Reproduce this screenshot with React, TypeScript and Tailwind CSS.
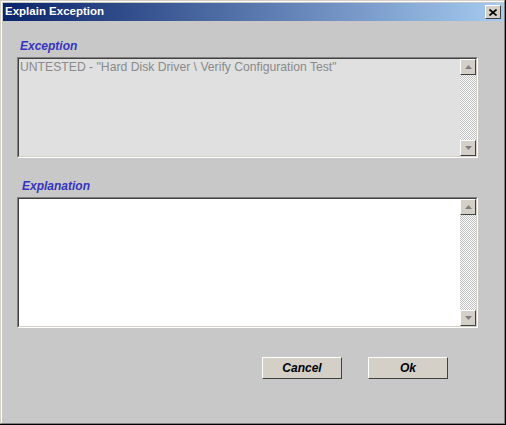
function Arrow({ up }: { up?: boolean }) {
  return (
    <svg width="7" height="4" viewBox="0 0 7 4" className="block">
      {up ? <polygon points="3.5,0 7,4 0,4" fill="#808080" /> : <polygon points="0,0 7,0 3.5,4" fill="#808080" />}
    </svg>
  );
}

function ScrollButton({ up }: { up?: boolean }) {
  return (
    <div className="w-[16px] h-[16px] bg-[#d4d0c8] border-t border-l border-white border-r border-b border-r-[#404040] border-b-[#404040] flex items-center justify-center shrink-0">
      <Arrow up={up} />
    </div>
  );
}

function Field({ h, bg, text }: { h: string; bg: string; text?: string }) {
  return (
    <div className={`${h} border-t border-l border-[#808080] border-r border-b border-r-white border-b-white`}>
      <div className={`h-full flex border-t border-l border-[#404040] border-r border-b border-r-[#d4d0c8] border-b-[#d4d0c8] ${bg}`}>
        <div className="flex-1 px-[1px] pt-[1px] text-[12.2px] leading-[15px] text-[#8a8a8a] font-['Liberation_Sans',Arial,sans-serif]">
          {text}
        </div>
        <div className="w-[16px] flex flex-col">
          <ScrollButton up />
          <div className="flex-1 bg-[repeating-conic-gradient(#c0c0c0_0_25%,#ffffff_0_50%)] bg-[length:2px_2px]" />
          <ScrollButton />
        </div>
      </div>
    </div>
  );
}

function Btn({ label }: { label: string }) {
  return (
    <button className="w-[80px] h-[22px] bg-[#d4d0c8] border-t border-l border-white border-r border-b border-r-[#404040] border-b-[#404040] text-[12px] font-bold italic text-black font-['Liberation_Sans',Arial,sans-serif] leading-none">
      {label}
    </button>
  );
}

export default function App() {
  return (
    <div className="w-[506px] h-[425px] border-r border-b border-black bg-[#c8c8c8]">
      <div className="h-full border-t border-l border-[#d4d0c8] border-r border-b border-r-[#808080] border-b-[#808080]">
        <div className="h-full border-t border-l border-white flex flex-col">
          <div className="mx-[1px] mt-[1px] h-[18px] flex items-center justify-between pl-[2px] pr-[2px] bg-[linear-gradient(90deg,#0a246a,#a6caf0)]">
            <span className="text-white text-[11.5px] font-bold font-['Liberation_Sans',Arial,sans-serif]">
              Explain Exception
            </span>
            <div className="w-[16px] h-[14px] bg-[#d4d0c8] border-t border-l border-white border-r border-b border-r-[#404040] border-b-[#404040] flex items-center justify-center">
              <svg width="8" height="7" viewBox="0 0 8 7">
                <path d="M0.5 0.5 L7.5 6.5 M7.5 0.5 L0.5 6.5" stroke="#000" strokeWidth="1.6" />
              </svg>
            </div>
          </div>
          <div className="pl-[15px] pr-[26px] flex flex-col">
            <div className="mt-[17px] pl-[3px] h-[16px] text-[12px] leading-[16px] font-bold italic text-[#3434c0] font-['Liberation_Sans',Arial,sans-serif]">
              Exception
            </div>
            <div className="mt-[3px]">
              <Field h="h-[101px]" bg="bg-[#e0e0e0]" text={'UNTESTED - "Hard Disk Driver \\ Verify Configuration Test"'} />
            </div>
            <div className="mt-[20px] pl-[5px] h-[16px] text-[12px] leading-[16px] font-bold italic text-[#3434c0] font-['Liberation_Sans',Arial,sans-serif]">
              Explanation
            </div>
            <div className="mt-[3px]">
              <Field h="h-[131px]" bg="bg-white" />
            </div>
            <div className="mt-[29px] flex gap-[26px] pl-[245px]">
              <Btn label="Cancel" />
              <Btn label="Ok" />
            </div>
          </div>
        </div>
      </div>
    </div>
  );
}
